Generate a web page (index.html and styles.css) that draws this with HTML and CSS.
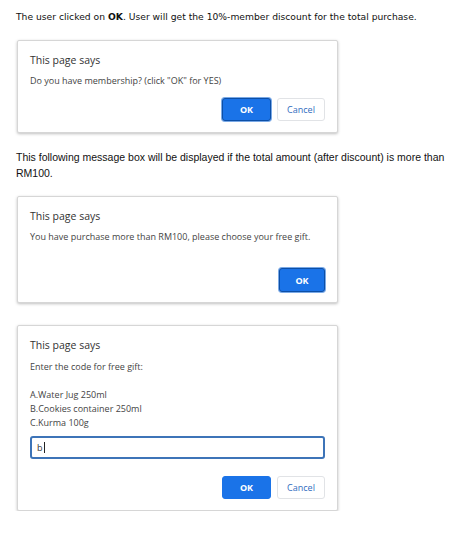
FILE: index.html
```html
<!DOCTYPE html>
<html lang="en">
<head>
	<meta charset="UTF-8">
	<title>Membership discount</title>
	<link rel="stylesheet" href="styles.css">
</head>
<body>
	<main class="page">
		<p class="note first">The user clicked on <b>OK</b>. User will get the 10%-member discount for the total purchase.</p>

		<section class="dialog confirm">
			<div class="title">This page says</div>
			<div class="msg">Do you have membership? (click "OK" for YES)</div>
			<div class="buttons">
				<button class="btn ok focus">OK</button>
				<button class="btn cancel">Cancel</button>
			</div>
		</section>

		<p class="note second">This following message box will be displayed if the total amount (after discount) is more than RM100.</p>

		<section class="dialog alert">
			<div class="title">This page says</div>
			<div class="msg">You have purchase more than RM100, please choose your free gift.</div>
			<div class="buttons">
				<button class="btn ok focus">OK</button>
			</div>
		</section>

		<section class="dialog prompt">
			<div class="title">This page says</div>
			<div class="msg lines">Enter the code for free gift:<br><br>A.Water Jug 250ml<br>B.Cookies container 250ml<br>C.Kurma 100g</div>
			<div class="field">b<span class="caret"></span></div>
			<div class="buttons">
				<button class="btn ok">OK</button>
				<button class="btn cancel">Cancel</button>
			</div>
		</section>
	</main>
</body>
</html>
```

FILE: styles.css
```css
/* page */
body {
	margin: 0px;
	background: #fff;
}
main.page {
	padding: 10px 0px 0px 16px;
	display: flex;
	flex-direction: column;
	align-items: flex-start;
}
p.note {
	margin: 0px;
	color: #111;
}
p.note.first {
	font: 9.2px "DejaVu Sans", sans-serif;
	line-height: 13px;
	margin-bottom: 17px;
}
p.note.second {
	font: 10.5px "Liberation Sans", Arial, sans-serif;
	line-height: 16px;
	width: 440px;
	margin-top: 16px;
	margin-bottom: 15px;
}

/* dialogs */
section.dialog {
	box-sizing: border-box;
	width: 321px;
	margin-left: 1px;
	padding: 12px 12px 11px 12px;
	background: #fff;
	border: 1px solid #d6d6d6;
	border-radius: 2px;
	box-shadow: 0px 1px 3px rgba(0,0,0,.25);
	font-family: "Open Sans", sans-serif;
	color: #333;
}
section.dialog .title {
	font-size: 10.5px;
	line-height: 14px;
	color: #333;
}
section.dialog .msg {
	font-size: 9px;
	line-height: 14px;
	margin-top: 7px;
	color: #444;
}
section.dialog .msg.lines {
	margin-top: 8px;
}
section.dialog .buttons {
	display: flex;
	justify-content: flex-end;
	gap: 6px;
	margin-top: 10px;
}
section.alert {
	padding-bottom: 10px;
}
section.alert .buttons {
	margin-top: 24px;
}
section.prompt {
	margin-top: 22px;
}
section.prompt .buttons {
	margin-top: 17px;
}

/* buttons */
.btn {
	box-sizing: border-box;
	height: 23px;
	width: 48px;
	border-radius: 3px;
	font: bold 9px "Open Sans", sans-serif;
	padding: 0px;
}
.btn.ok {
	width: 49px;
	background: #1a73e8;
	border: 1px solid #1a73e8;
	color: #fff;
}
.btn.ok.focus {
	border: 1px solid #0d4fa6;
	box-shadow: 0px 0px 0px 1px #7aa9e6;
}
section.alert .btn.ok {
	height: 24px;
	width: 46px;
}
.btn.cancel {
	background: #fff;
	border: 1px solid #e1e3e6;
	color: #2f6cc0;
	font-weight: normal;
}

/* prompt input */
.field {
	box-sizing: border-box;
	height: 23px;
	margin-top: 6px;
	padding: 0px 5px;
	border: 2px solid #3d74b8;
	border-radius: 3px;
	font-size: 9px;
	line-height: 19px;
	color: #333;
	display: flex;
	align-items: center;
}
.field .caret {
	display: inline-block;
	width: 1px;
	height: 11px;
	margin-left: 1px;
	background: #222;
}
```
